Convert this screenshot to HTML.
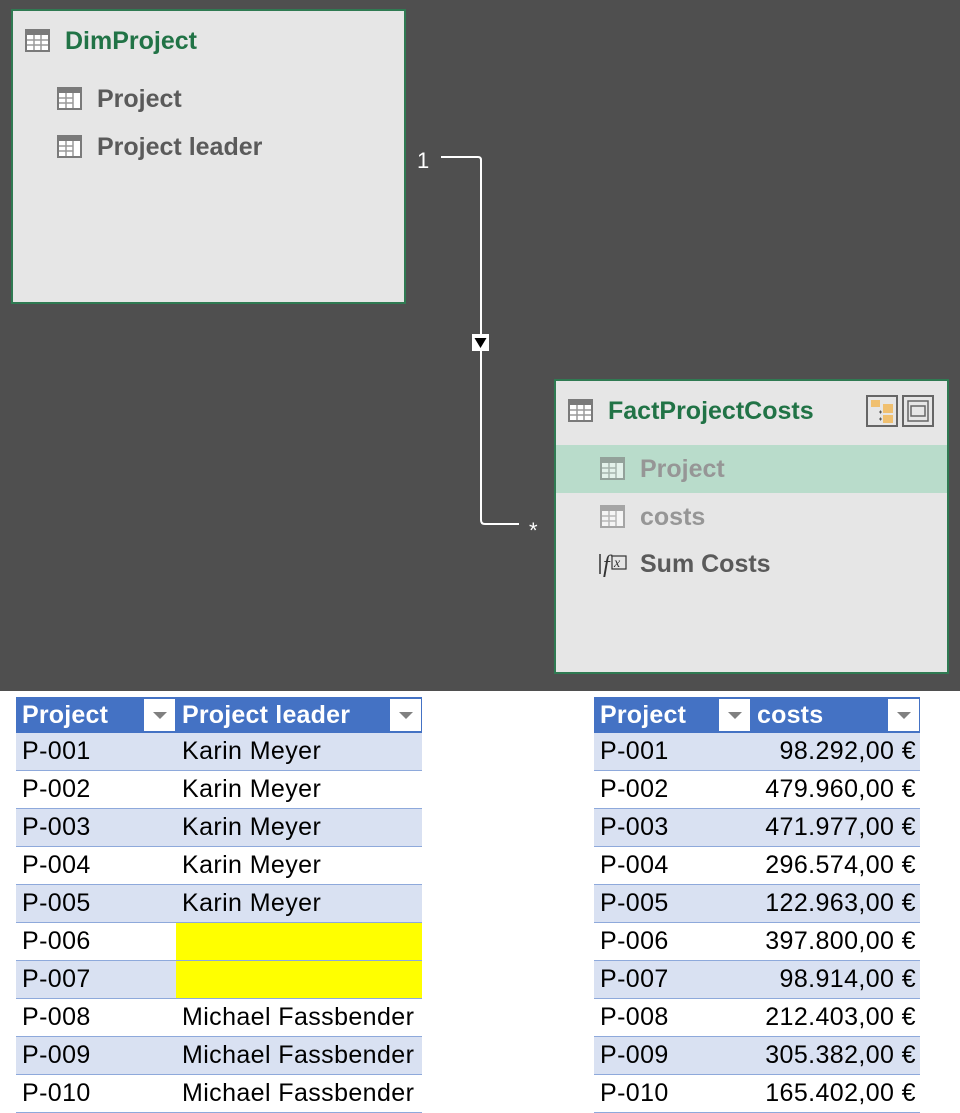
<!DOCTYPE html>
<html><head><meta charset="utf-8"><style>
body{margin:0;width:960px;height:1113px;overflow:hidden;background:#fff;font-family:"Liberation Sans",sans-serif;position:relative}
.dark{position:absolute;left:0;top:0;width:960px;height:691px;background:#4f4f4f}
.box{position:absolute;background:#e6e6e6;border:2px solid #2f7a52;box-sizing:border-box}
.t{position:absolute;font-weight:bold;font-size:25px;white-space:nowrap}
.title{color:#217346;font-size:25px}
.fld{color:#5a5a5a}
.gray{color:#969696}
.ic{position:absolute}
table{position:absolute;border-collapse:collapse;font-size:25px;letter-spacing:0.4px;color:#000}
td{height:37px;padding:0 4px 0 6px;border-bottom:1px solid #8ea9db;white-space:nowrap}
th{height:36px;background:#4472c4;color:#fff;text-align:left;padding:0 4px 0 6px;font-weight:bold;position:relative;letter-spacing:0.2px}
tr.b td{background:#d9e1f2}
.dd{position:absolute;right:1px;top:2px;width:31px;height:32px;background:#fff}
.dd:after{content:"";position:absolute;left:9px;top:13px;border-left:7px solid transparent;border-right:7px solid transparent;border-top:7px solid #808080}
.r{text-align:right}
.y{background:#ffff00!important}
</style></head><body>
<div class="dark"></div>
<svg width="0" height="0" style="position:absolute"><defs>
<g id="tbl"><rect x="0" y="0" width="25" height="23" fill="#7a7a7a"/><rect x="2" y="6" width="21" height="15" fill="#fff"/><path d="M2 11H23M2 16H23M9 6V21M16 6V21" stroke="#9a9a9a" stroke-width="1.5"/></g>
<g id="fl"><rect x="0" y="0" width="25" height="23" fill="#7a7a7a"/><rect x="2" y="6" width="21" height="15" fill="#fff"/><path d="M2 11H16M2 16H16M9 6V21M16 6V21" stroke="#9a9a9a" stroke-width="1.5"/></g>
</defs></svg>

<div class="box" style="left:11px;top:9px;width:395px;height:295px"></div>
<svg class="ic" style="left:25px;top:29px" width="26" height="24"><use href="#tbl"/></svg>
<div class="t title" style="left:65px;top:27px">DimProject</div>
<svg class="ic" style="left:57px;top:87px" width="26" height="24"><use href="#fl"/></svg>
<div class="t fld" style="left:97px;top:85px">Project</div>
<svg class="ic" style="left:57px;top:135px" width="26" height="24"><use href="#fl"/></svg>
<div class="t fld" style="left:97px;top:133px">Project leader</div>

<svg class="ic" style="left:0;top:0" width="960" height="690">
<text x="417" y="168" fill="#fff" font-size="22" font-family="Liberation Sans">1</text>
<path d="M441 157H478Q481 157 481 160V520Q481 524 485 524H519" fill="none" stroke="#fff" stroke-width="2"/>
<rect x="472" y="334" width="17" height="17" fill="#fff"/>
<path d="M474.5 338H486.5L480.5 348Z" fill="#000"/>
<text x="529" y="538" fill="#fff" font-size="22" font-family="Liberation Sans">*</text>
</svg>

<div class="box" style="left:554px;top:379px;width:395px;height:295px"></div>
<div style="position:absolute;left:556px;top:445px;width:391px;height:48px;background:#b9dccb"></div>
<svg class="ic" style="left:568px;top:399px" width="26" height="24"><use href="#tbl"/></svg>
<div class="t title" style="left:608px;top:397px">FactProjectCosts</div>
<svg class="ic" style="left:866px;top:395px" width="70" height="34">
<rect x="1" y="1" width="30" height="30" fill="#e6e6e6" stroke="#666" stroke-width="2"/>
<rect x="5" y="5" width="9" height="7" fill="#f0c070"/><rect x="17" y="9" width="10" height="9" fill="#f0c070"/><rect x="17" y="20" width="10" height="8" fill="#f0c070"/>
<path d="M13 17H16M14.5 15.5V18.5M13 24H16M14.5 22.5V25.5" stroke="#555"/>
<rect x="37" y="1" width="30" height="30" fill="#e6e6e6" stroke="#666" stroke-width="2"/>
<rect x="42" y="6" width="20" height="20" fill="none" stroke="#666" stroke-width="1.5"/>
<rect x="45" y="11" width="14" height="10" fill="none" stroke="#666" stroke-width="1.5"/>
</svg>
<svg class="ic" style="left:600px;top:457px;opacity:.6" width="26" height="24"><use href="#fl"/></svg>
<div class="t gray" style="left:640px;top:455px">Project</div>
<svg class="ic" style="left:600px;top:505px;opacity:.6" width="26" height="24"><use href="#fl"/></svg>
<div class="t gray" style="left:640px;top:503px">costs</div>
<svg class="ic" style="left:597px;top:550px" width="32" height="30">
<path d="M3 4V24" stroke="#333" stroke-width="1.5"/>
<text x="6" y="22" font-family="Liberation Serif" font-style="italic" font-size="24" fill="#333">f</text>
<rect x="15" y="6" width="14" height="13" fill="none" stroke="#333" stroke-width="1.2"/>
<text x="17" y="17" font-family="Liberation Serif" font-style="italic" font-size="14" fill="#333">x</text>
</svg>
<div class="t fld" style="left:640px;top:550px">Sum Costs</div>

<table style="left:16px;top:697px;width:406px">
<colgroup><col style="width:160px"><col style="width:246px"></colgroup>
<tr><th>Project<span class="dd"></span></th><th>Project leader<span class="dd"></span></th></tr>
<tr class="b"><td>P-001</td><td>Karin Meyer</td></tr>
<tr><td>P-002</td><td>Karin Meyer</td></tr>
<tr class="b"><td>P-003</td><td>Karin Meyer</td></tr>
<tr><td>P-004</td><td>Karin Meyer</td></tr>
<tr class="b"><td>P-005</td><td>Karin Meyer</td></tr>
<tr><td>P-006</td><td class="y"></td></tr>
<tr class="b"><td>P-007</td><td class="y"></td></tr>
<tr><td>P-008</td><td>Michael Fassbender</td></tr>
<tr class="b"><td>P-009</td><td>Michael Fassbender</td></tr>
<tr><td>P-010</td><td>Michael Fassbender</td></tr>
</table>

<table style="left:594px;top:697px;width:326px">
<colgroup><col style="width:157px"><col style="width:169px"></colgroup>
<tr><th>Project<span class="dd"></span></th><th>costs<span class="dd"></span></th></tr>
<tr class="b"><td>P-001</td><td class="r">98.292,00 €</td></tr>
<tr><td>P-002</td><td class="r">479.960,00 €</td></tr>
<tr class="b"><td>P-003</td><td class="r">471.977,00 €</td></tr>
<tr><td>P-004</td><td class="r">296.574,00 €</td></tr>
<tr class="b"><td>P-005</td><td class="r">122.963,00 €</td></tr>
<tr><td>P-006</td><td class="r">397.800,00 €</td></tr>
<tr class="b"><td>P-007</td><td class="r">98.914,00 €</td></tr>
<tr><td>P-008</td><td class="r">212.403,00 €</td></tr>
<tr class="b"><td>P-009</td><td class="r">305.382,00 €</td></tr>
<tr><td>P-010</td><td class="r">165.402,00 €</td></tr>
</table>
</body></html>
